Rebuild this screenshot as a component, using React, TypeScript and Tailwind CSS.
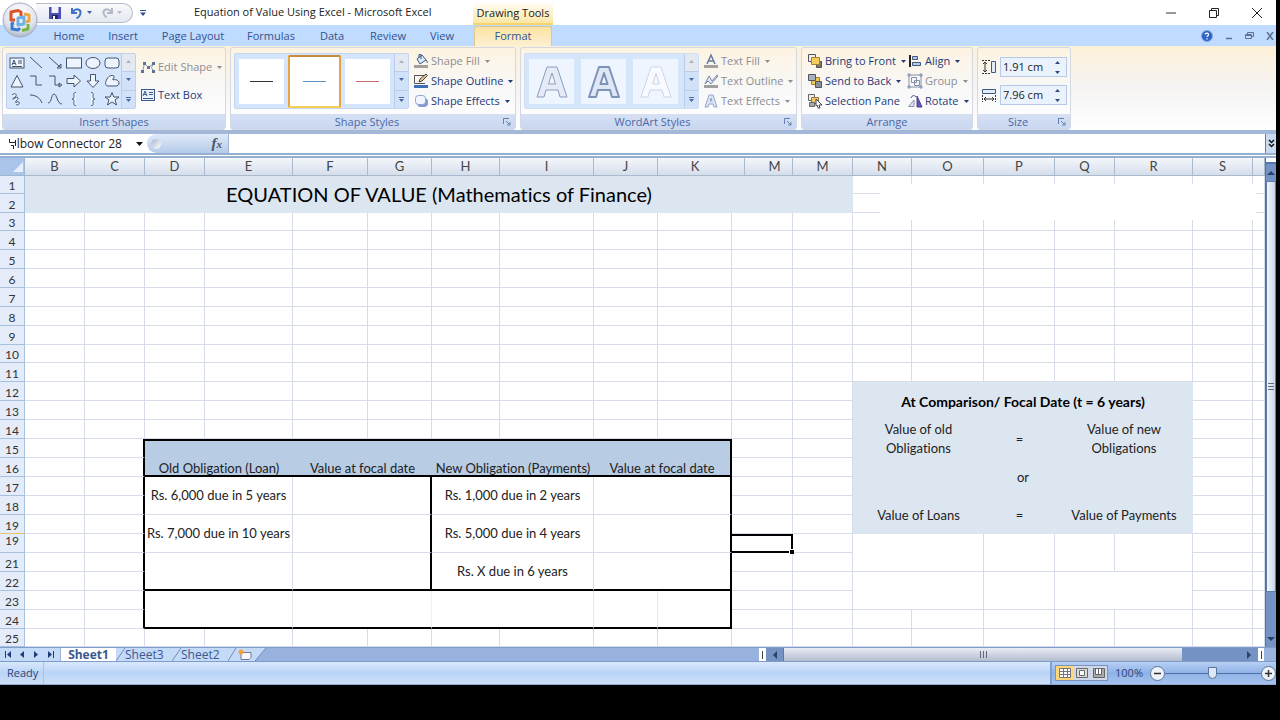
import type { ReactNode } from "react";
import clsx from "clsx";

const TABS = [
  { name: "Home", width: "w-[54px]" },
  { name: "Insert", width: "w-[54px]" },
  { name: "Page Layout", width: "w-[86px]" },
  { name: "Formulas", width: "w-[70px]" },
  { name: "Data", width: "w-[52px]" },
  { name: "Review", width: "w-[60px]" },
  { name: "View", width: "w-[48px]" },
];

const SHAPES: { name: string; art: ReactNode }[] = [
  {
    name: "Text box",
    art: (
      <>
        <rect x="2" y="4" width="14" height="10" />
        <path d="M4 11l2-5 2 5M5 9.500h2M10 7h4M10 9h4M4 12.500h10" />
      </>
    ),
  },
  { name: "Line", art: <path d="M3 3l12 11" /> },
  { name: "Arrow", art: <path d="M3 3l12 11M15 10v4h-4z" /> },
  { name: "Rectangle", art: <rect x="1.500" y="4" width="15" height="10" /> },
  { name: "Oval", art: <ellipse cx="9" cy="9" rx="7" ry="5.500" /> },
  { name: "Rounded rectangle", art: <rect x="2" y="4" width="14" height="10" rx="3" /> },
  { name: "Triangle", art: <path d="M9 3.500L15 15H3z" /> },
  { name: "Elbow connector", art: <path d="M3 4h6v9h6" fill="none" /> },
  { name: "Elbow arrow connector", art: <path d="M3 4h6v9h5M13 11l3 2-3 2z" fill="none" /> },
  { name: "Right arrow", art: <path d="M2 6.500h7V3l6.500 6L9 15v-3.500H2z" /> },
  { name: "Down arrow", art: <path d="M6.500 2.500h5V9H15l-6 6.500L3 9h3.500z" /> },
  {
    name: "Freeform",
    art: <path d="M4 7c2-4 6-4 7-3 1 1-2 3-1 4 2-1 6 0 6 3 0 2-1 3-4 3H5c-3 0-3-4-1-7z" />,
  },
  {
    name: "Scribble",
    art: <path d="M4 5c3-3 6 0 3 2s-3 3 0 1 4 0 2 2-2 3 0 2 3 1 2 2-3 2-2 0" />,
  },
  { name: "Arc", art: <path d="M3 5c6 0 10 3 12 8" fill="none" /> },
  { name: "Curve", art: <path d="M2 13c4 0 3-9 6-9s3 10 8 10" fill="none" /> },
  { name: "Left brace", art: <path d="M11 2.500c-3 0-2 2-2 4s-1 2.500-2 2.500c1 0 2 .500 2 2.500s-1 4 2 4" /> },
  { name: "Right brace", art: <path d="M7 2.500c3 0 2 2 2 4s1 2.500 2 2.500c-1 0-2 .500-2 2.500s1 4-2 4" /> },
  { name: "Star", art: <path d="M9 2.500l1.800 4.500H16l-4 3 1.600 5L9 12l-4.600 3L6 10 2 7h5.200z" /> },
];

function Caret() {
  return (
    <svg className="ml-[3px] h-[3px] w-[5px] shrink-0" viewBox="0 0 5 3" aria-hidden="true">
      <path d="M0 0h5L2.500 3z" fill="currentColor" />
    </svg>
  );
}

function Icon({ children }: { children: ReactNode }) {
  return (
    <svg
      className="h-4 w-4 shrink-0"
      viewBox="0 0 16 16"
      fill="none"
      stroke="#3d5a85"
      strokeWidth="1"
      aria-hidden="true"
    >
      {children}
    </svg>
  );
}

function ToolButton({
  icon,
  label,
  caret = true,
  muted = false,
}: {
  icon: ReactNode;
  label: string;
  caret?: boolean;
  muted?: boolean;
}) {
  return (
    <button
      type="button"
      className={clsx(
        "flex h-5 items-center gap-[2px] whitespace-nowrap",
        muted ? "text-[#8d8d93]" : "text-[#1f3a78]",
      )}
    >
      <Icon>{icon}</Icon>
      <span>{label}</span>
      {caret && <Caret />}
    </button>
  );
}

function Group({
  title,
  width,
  launcher = false,
  children,
}: {
  title: string;
  width: string;
  launcher?: boolean;
  children: ReactNode;
}) {
  return (
    <section
      className={clsx(
        "flex shrink-0 flex-col overflow-hidden rounded-[3px] border border-[#d3d8e2] bg-linear-to-b from-[#fdf3e1] via-[#f8f8f8] to-white",
        width,
      )}
    >
      <div className="flex h-[66px] items-center px-[3px]">{children}</div>
      <div className="flex h-[15px] items-center bg-linear-to-b from-[#d6e0f3] to-[#c9d7f1] text-[#4a69a6]">
        <h2 className="flex-1 text-center leading-[14px]">{title}</h2>
        {launcher && (
          <button type="button" aria-label={`${title} options`} className="mr-1 h-2 w-2">
            <svg viewBox="0 0 8 8" fill="none" stroke="#6480b0" className="block h-2 w-2">
              <path d="M.5 6V.5H6M3 3l4 4M7 4v3H4" />
            </svg>
          </button>
        )}
      </div>
    </section>
  );
}

function GalleryScroll() {
  return (
    <div className="flex w-[14px] shrink-0 flex-col border-l border-[#b9cdea] text-[#4a69a3]">
      {["M0 3h5L2.500 0z", "M0 0h5L2.500 3z", "M0 2h5L2.500 5zM0 0h5v1H0z"].map((d, i) => (
        <button
          key={d}
          type="button"
          aria-label={["Previous row", "Next row", "More"][i]}
          className={clsx(
            "flex flex-1 items-center justify-center border-b border-[#b9cdea] last:border-b-0",
            i === 0 ? "bg-[#e4e8f0] text-[#a9b1c2]" : "bg-[#d1e1f8]",
          )}
        >
          <svg className="h-[5px] w-[5px]" viewBox="0 0 5 5">
            <path d={d} fill="currentColor" />
          </svg>
        </button>
      ))}
    </div>
  );
}

function WordArtSample({ stroke, width, fill }: { stroke: string; width: number; fill: string }) {
  return (
    <button
      type="button"
      aria-label="WordArt style"
      className="flex h-[45px] w-[45px] items-center justify-center bg-[#eff5fe]"
    >
      <svg className="h-9 w-9" viewBox="0 0 36 36" aria-hidden="true">
        <path
          d="M3 34L13 4h10l10 30h-7l-2-7H12l-2 7zM14.500 21h7L18 10z"
          fill={fill}
          stroke={stroke}
          strokeWidth={width}
          strokeLinejoin="round"
        />
      </svg>
    </button>
  );
}

function TitleBar() {
  return (
    <header className="flex h-[25px] items-center bg-white text-xs text-[#222]">
      <div className="ml-9 flex h-5 w-[97px] items-center rounded-r-full border border-l-0 border-[#b8bcc8] bg-linear-to-b from-[#f8f9fc] to-[#e4e8f1] pl-3">
        <button type="button" aria-label="Save">
          <svg className="h-[14px] w-[14px]" viewBox="0 0 14 14">
            <path d="M1 1h12v12H1z" fill="#4a4fb5" />
            <path d="M3.500 1h7v6h-7z" fill="#eef1fb" />
            <path d="M4 9h6v4H4z" fill="#23286e" />
            <path d="M5 10h2v3H5z" fill="#fff" />
          </svg>
        </button>
        <button type="button" aria-label="Undo" className="ml-2 flex items-center text-[#3a5ea8]">
          <svg className="h-[14px] w-[14px]" viewBox="0 0 14 14" fill="none" stroke="#3f73c8" strokeWidth="2">
            <path d="M3 5.500C6 2 11 3 10.500 7c-.2 2-1.500 4-4 5.500M2 2v5h5" />
          </svg>
          <Caret />
        </button>
        <button type="button" aria-label="Redo" className="ml-2 flex items-center text-[#b3b9c6]">
          <svg className="h-[14px] w-[14px]" viewBox="0 0 14 14" fill="none" stroke="#b3b9c6" strokeWidth="2">
            <path d="M11 5.500C8 2 3 3 3.500 7c.2 2 1.500 3 3 4.500M12 2v5H7" />
          </svg>
          <Caret />
        </button>
      </div>
      <button type="button" aria-label="Customize quick access toolbar" className="ml-[7px] text-[#2e4f8d]">
        <svg className="h-[6px] w-[6px]" viewBox="0 0 6 6">
          <path d="M0 0h6v1H0zM0 2.500h6L3 6z" fill="currentColor" />
        </svg>
      </button>
      <h1 className="ml-12 w-[279px] text-[11px] whitespace-nowrap">
        Equation of Value Using Excel - Microsoft Excel
      </h1>
      <div className="h-[22px] w-[80px] self-end border-b-2 border-[#f5d56b] bg-linear-to-b from-[#fffdf6] to-[#fbe6a4] text-center text-[11px] leading-5">
        Drawing Tools
      </div>
      <div className="ml-auto flex items-center gap-[33px] pr-[14px]">
        <button type="button" aria-label="Minimize">
          <svg className="h-3 w-[10px]" viewBox="0 0 10 12">
            <path d="M0 6h10" stroke="#333" />
          </svg>
        </button>
        <button type="button" aria-label="Restore">
          <svg className="h-[10px] w-[10px]" viewBox="0 0 10 10" fill="none" stroke="#222">
            <path d="M.5 2.500h7v7h-7zM2.500 2.500v-2h7v7h-2" />
          </svg>
        </button>
        <button type="button" aria-label="Close">
          <svg className="h-[10px] w-[10px]" viewBox="0 0 10 10" stroke="#222">
            <path d="M0 0l10 10M10 0L0 10" />
          </svg>
        </button>
      </div>
    </header>
  );
}

function OfficeButton() {
  return (
    <button type="button" aria-label="Office menu" className="absolute top-[2px] left-[2px]">
      <svg className="h-9 w-9" viewBox="0 0 36 36" fill="none">
        <defs>
          <radialGradient id="orb" cx=".5" cy=".3" r=".7">
            <stop offset="0" stopColor="#fff" />
            <stop offset=".7" stopColor="#dfe3ec" />
            <stop offset="1" stopColor="#aab4c8" />
          </radialGradient>
        </defs>
        <circle cx="18" cy="18" r="17" fill="url(#orb)" stroke="#a3adc0" />
        <g strokeWidth="3" strokeLinejoin="round">
          <path d="M13 18H9V10l7-1.500L19 10v4" stroke="#d9532a" />
          <path d="M22 12l5 1v6l-3 1" stroke="#f0a63a" />
          <path d="M16 16l6-1v7l-6 1z" stroke="#6fb0e6" />
          <path d="M12 21l-2 .500V27l6 1 2-2" stroke="#3a7bd0" />
          <path d="M26 22v5l-6 1.500" stroke="#74b83e" />
        </g>
      </svg>
    </button>
  );
}

function TabRow() {
  return (
    <nav className="flex h-[21px] items-end bg-[#bfdbff] pl-[42px] text-[11px] text-[#34538f]">
      {TABS.map((t) => (
        <button key={t.name} type="button" className={clsx("h-5 pt-px text-center", t.width)}>
          {t.name}
        </button>
      ))}
      <button
        type="button"
        className="ml-2 h-5 w-[78px] rounded-t-[3px] border border-b-0 border-[#dcc78f] bg-linear-to-b from-[#fbe3a0] to-[#fdf0d2]"
      >
        Format
      </button>
      <div className="ml-auto flex h-[21px] items-center gap-3 pr-[2px]">
        <button type="button" aria-label="Help">
          <svg className="h-3 w-3" viewBox="0 0 12 12" fill="none">
            <circle cx="6" cy="6" r="5.500" fill="#2d62c4" stroke="#86a7e0" />
            <path d="M4 4.500c.5-2 4-1.500 3.500.3C7.200 6 6 6 6 7M6 8.200v1.200" stroke="#fff" strokeWidth="1.300" />
          </svg>
        </button>
        <button type="button" aria-label="Minimize workbook">
          <svg className="h-[9px] w-2" viewBox="0 0 8 9">
            <path d="M1 7.500h6" stroke="#5d7290" strokeWidth="1.500" />
          </svg>
        </button>
        <button type="button" aria-label="Restore workbook">
          <svg className="h-[9px] w-[9px]" viewBox="0 0 9 9" fill="none" stroke="#5d7290">
            <path d="M.5 3.500h6v4h-6zM2.500 3V1.500h6v4H7M.5 4.500h6" />
          </svg>
        </button>
        <button type="button" aria-label="Close workbook">
          <svg className="h-2 w-2" viewBox="0 0 8 8" stroke="#5d7290" strokeWidth="1.500">
            <path d="M1 0l6 8M7 0L1 8" />
          </svg>
        </button>
      </div>
    </nav>
  );
}

const boxArt = (
  <>
    <rect x="1.500" y="2.500" width="13" height="11" fill="#e9f1fd" />
    <path d="M3 9l2-5 2 5M4 7.500h2M9 5.500h4M9 7.500h4M3 11.500h10" />
  </>
);

function Ribbon() {
  return (
    <div className="flex h-[88px] gap-1 border-b-4 border-[#a3b8d8] bg-linear-to-b from-[#fdf0d8] via-[#f5f4f3] to-white px-[2px] pt-px text-[11px]">
      <Group title="Insert Shapes" width="w-[224px]">
        <div className="flex h-[56px] shrink-0 rounded-[2px] border border-[#bdd0ec] bg-[#d5e5fb]">
          <div className="grid w-[114px] grid-cols-6">
            {SHAPES.map((s) => (
              <button key={s.name} type="button" aria-label={s.name} className="flex items-center justify-center">
                <svg className="h-[18px] w-[18px]" viewBox="0 0 18 18" fill="#eef4fd" stroke="#44546d">
                  {s.art}
                </svg>
              </button>
            ))}
          </div>
          <GalleryScroll />
        </div>
        <div className="ml-1 flex flex-col gap-2">
          <ToolButton
            muted
            label="Edit Shape"
            icon={
              <>
                <path d="M2.500 12.500l2-8 4 4 5-4-2 4 2 4" stroke="#8d9ab3" />
                <path d="M1 11h3v3H1zM3 3h3v3H3zM7 7h3v3H7zM12 3h3v3h-3zM12 11h3v3h-3z" fill="#5f7294" stroke="none" />
              </>
            }
          />
          <ToolButton caret={false} label="Text Box" icon={boxArt} />
        </div>
      </Group>

      <Group title="Shape Styles" width="w-[286px]" launcher>
        <div className="flex h-[56px] shrink-0 rounded-[2px] border border-[#c3d5ef] bg-[#d5e5fb]">
          <div className="flex w-[159px] items-center justify-between px-1">
            <button type="button" aria-label="Dark line" className="flex h-[45px] w-[45px] items-center justify-center bg-white">
              <span className="h-px w-[23px] bg-[#333]" />
            </button>
            <button
              type="button"
              aria-label="Blue line"
              className="flex h-[53px] w-[53px] items-center justify-center rounded-[2px] border-2 border-t-[#c98a3c] border-r-[#e3a53c] border-b-[#f6cf52] border-l-[#e3a53c] bg-white"
            >
              <span className="h-px w-[23px] bg-[#5d8fc4]" />
            </button>
            <button type="button" aria-label="Red line" className="flex h-[45px] w-[45px] items-center justify-center bg-white">
              <span className="h-px w-[23px] bg-[#c96a66]" />
            </button>
          </div>
          <GalleryScroll />
        </div>
        <div className="ml-1 flex flex-col">
          <ToolButton
            muted
            label="Shape Fill"
            icon={
              <>
                <path d="M4 6l5-4 4 5-6 4zM6 5V1.500h2V6M13 7c2 1 1 3 1 3" fill="#dde7f5" />
                <path d="M1 12h14v3H1z" fill="#a0a0a0" stroke="none" />
              </>
            }
          />
          <ToolButton
            label="Shape Outline"
            icon={
              <>
                <path d="M12 2.500H1.500v8H12" stroke="#555" />
                <path d="M6 9l1-3 6-5 1.500 1.500L9 8z" fill="#e6c98a" stroke="#444" />
                <path d="M1 12h14v3H1z" fill="#3f6fb5" stroke="none" />
              </>
            }
          />
          <ToolButton
            label="Shape Effects"
            icon={
              <>
                <rect x="4" y="5" width="11" height="9" rx="4" fill="#8399cf" stroke="none" />
                <rect x="2.500" y="2.500" width="10" height="9" rx="3" fill="#f1f5fd" stroke="#8fa5d4" />
              </>
            }
          />
        </div>
      </Group>

      <Group title="WordArt Styles" width="w-[277px]" launcher>
        <div className="flex h-[56px] shrink-0 rounded-[2px] border border-[#cfe0f5] bg-[#d5e6fb]">
          <div className="flex w-[159px] items-center gap-[7px] px-1">
            <WordArtSample stroke="#8e9cbb" width={1} fill="#e4eaf6" />
            <WordArtSample stroke="#7f93b8" width={2} fill="#dfe7f4" />
            <WordArtSample stroke="#cfd5e2" width={1} fill="#f8faff" />
          </div>
          <GalleryScroll />
        </div>
        <div className="ml-1 flex flex-col">
          <ToolButton
            muted
            label="Text Fill"
            icon={
              <>
                <path d="M4 11l4-9 4 9M5.500 8h5" stroke="#66799f" strokeWidth="1.500" />
                <path d="M1 12h14v3H1z" fill="#a0a0a0" stroke="none" />
              </>
            }
          />
          <ToolButton
            muted
            label="Text Outline"
            icon={
              <>
                <path d="M2 11l4-8 3 5 5-6 1 1-7 8-3-3z" fill="#e0e5ef" stroke="#7486a8" />
                <path d="M1 12h14v3H1z" fill="#a0a0a0" stroke="none" />
              </>
            }
          />
          <ToolButton
            muted
            label="Text Effects"
            icon={
              <path
                d="M2 14L6 2h4l4 12h-3l-1-3H6l-1 3zM7 8h2L8 5z"
                fill="#dce5f6"
                stroke="#94a6cc"
              />
            }
          />
        </div>
      </Group>

      <Group title="Arrange" width="w-[172px]">
        <div className="flex w-[102px] shrink-0 flex-col pl-[2px]">
          <ToolButton
            label="Bring to Front"
            icon={
              <>
                <path d="M1.500 1.500h7v7h-7z" fill="#eee" stroke="#555" />
                <path d="M9.500 8.500h5v6h-5z" fill="#777" stroke="#555" />
                <path d="M4.500 4.500h8v7h-8z" fill="#f6cd5a" stroke="#a9802b" />
              </>
            }
          />
          <ToolButton
            label="Send to Back"
            icon={
              <>
                <path d="M4.500 4.500h8v7h-8z" fill="#f3c850" stroke="#a9802b" />
                <path d="M1.500 1.500h7v6h-7z" fill="#a7b0c0" stroke="#555" />
                <path d="M8.500 8.500h6v6h-6z" fill="#888e9a" stroke="#555" />
              </>
            }
          />
          <ToolButton
            caret={false}
            label="Selection Pane"
            icon={
              <>
                <path d="M1.500 1.500h6v6h-6z" fill="#eee" stroke="#666" />
                <path d="M4.500 4.500h7v6h-7z" fill="#efc860" stroke="#997635" />
                <path d="M2.500 9.500h5v4h-5z" fill="#aaa" stroke="#666" />
                <path d="M9 6l6 6h-3l1 3h-2l-1-3-1 1z" fill="#fff" stroke="#445" />
              </>
            }
          />
        </div>
        <div className="flex flex-col">
          <ToolButton
            label="Align"
            icon={
              <>
                <path d="M3 2v12" stroke="#222" strokeWidth="2" />
                <path d="M5.500 3.500h5v3h-5zM5.500 9.500h8v3h-8z" fill="#b9c8df" />
              </>
            }
          />
          <ToolButton
            muted
            label="Group"
            icon={
              <path
                d="M2 2h12v12H2zM4.500 4.500h5v5h-5zM7.500 7.500h5v5h-5zM1 1h2v2H1zM13 1h2v2h-2zM1 13h2v2H1zM13 13h2v2h-2z"
                stroke="#8290ac"
              />
            }
          />
          <ToolButton
            label="Rotate"
            icon={
              <>
                <path d="M7 13.500H1.500L7 7z" fill="#dfe5f0" stroke="#8793a8" />
                <path d="M10 3v11h5z" fill="#6a55b0" stroke="#4d3b94" />
                <path d="M4 5c1-3 4-3 5-1" stroke="#34508c" />
              </>
            }
          />
        </div>
      </Group>

      <Group title="Size" width="w-[94px]" launcher>
        <div className="flex flex-col gap-2">
          <SizeField
            label="Shape height"
            value="1.91 cm"
            icon={
              <>
                <path d="M10.500 2.500h4v11h-4z" fill="#e3ebf7" />
                <path d="M4 3v10M2 5l2-2 2 2M2 11l2 2 2-2" stroke="#333" />
                <path d="M1 1.500h8M1 14.500h8" stroke="#333" strokeDasharray="2 1" />
              </>
            }
          />
          <SizeField
            label="Shape width"
            value="7.96 cm"
            icon={
              <>
                <path d="M1.500 2.500h13v4h-13z" fill="#e3ebf7" />
                <path d="M3 12h10M5 10l-2 2 2 2M11 10l2 2-2 2" stroke="#333" />
                <path d="M1.500 8v7M14.500 8v7" stroke="#333" strokeDasharray="2 1" />
              </>
            }
          />
        </div>
      </Group>
    </div>
  );
}

function SizeField({ label, value, icon }: { label: string; value: string; icon: ReactNode }) {
  return (
    <label className="flex items-center gap-[3px]">
      <Icon>{icon}</Icon>
      <span className="flex h-5 w-[67px] items-center border border-[#b6cae8] bg-[#eaf2fd] pr-[6px]">
        <input aria-label={label} defaultValue={value} className="w-full min-w-0 pl-[2px] text-[#222] outline-none" />
        <svg className="h-[13px] w-[5px] shrink-0" viewBox="0 0 5 13" fill="#2f4a80">
          <path d="M0 3h5L2.500 0zM0 10h5L2.500 13z" />
        </svg>
      </span>
    </label>
  );
}

function FormulaBar() {
  return (
    <div className="flex h-6 items-start border-b-[5px] border-double border-[#96b0d0] bg-white">
      <div className="relative flex h-[19px] w-[147px] items-center">
        <input
          aria-label="Name box"
          defaultValue="Elbow Connector 28"
          className="w-[136px] pl-[10px] text-xs text-[#222] outline-none"
        />
        {/* elbow pointer resting on the first letter */}
        <svg className="absolute top-[3px] left-2 h-[14px] w-[9px] bg-white" viewBox="0 0 9 14" fill="none" stroke="#222">
          <path d="M1.500 2v3.500H8M7.500 3v6M3 8.500h2.500V12" />
        </svg>
        <button type="button" aria-label="Names">
          <svg className="h-1 w-[7px]" viewBox="0 0 7 4">
            <path d="M0 0h7L3.500 4z" fill="#111" />
          </svg>
        </button>
      </div>
      <div className="flex h-[19px] w-[82px] items-center rounded-l-full border-r border-[#9db4d4] bg-linear-to-b from-[#dfeaf9] to-[#b5cbe9] pl-1">
        <span className="h-[10px] w-[10px] rounded-full bg-linear-to-br from-[#a9b8d2] to-white" />
        <button
          type="button"
          aria-label="Insert function"
          className="mr-[6px] ml-auto font-['Liberation_Serif',serif] text-[15px] leading-4 font-bold text-[#4a5468] italic"
        >
          f<span className="text-[11px]">x</span>
        </button>
      </div>
      <input aria-label="Formula" className="h-[19px] min-w-0 flex-1 px-1 text-xs outline-none" />
      <button
        type="button"
        aria-label="Expand formula bar"
        className="flex h-[19px] w-[11px] items-center justify-center border-l border-[#5f7fae] bg-[#c9dbf3]"
      >
        <svg className="h-[9px] w-[7px]" viewBox="0 0 7 9" fill="none" stroke="#111" strokeWidth="1.500">
          <path d="M1 1l2.500 2.500L6 1M1 5l2.500 2.500L6 5" />
        </svg>
      </button>
    </div>
  );
}

// K runs on past its body column and the M beside it starts late
const HEADS = [
  { name: "B" },
  { name: "C" },
  { name: "D" },
  { name: "E" },
  { name: "F" },
  { name: "G" },
  { name: "H" },
  { name: "I" },
  { name: "J" },
  { name: "K", span: 2, pad: "pr-3" },
  { name: "M", pad: "pl-3" },
  { name: "M" },
  { name: "N" },
  { name: "O" },
  { name: "P" },
  { name: "Q" },
  { name: "R" },
  { name: "S" },
  { name: "" },
];

const COL_WIDTHS = [
  "w-[60px]",
  "w-[60px]",
  "w-[60px]",
  "w-[88px]",
  "w-[75px]",
  "w-[64px]",
  "w-[68px]",
  "w-[94px]",
  "w-[64px]",
  "w-[74px]",
  "w-[13px]",
  "w-[48px]",
  "w-[60px]",
  "w-[59px]",
  "w-[72px]",
  "w-[71px]",
  "w-[60px]",
  "w-[78px]",
  "w-[60px]",
  "w-auto",
];

type Cell = { row: number; col: number; rows?: number; cols?: number; text?: ReactNode; style?: string };

const GRID = "border-r border-b border-[#d6dce9]";
const HEAD = "border-t-2 border-b-2 border-black bg-[#b8cce4] align-bottom leading-[14px]";
const PANEL = "bg-[#dce6f1] leading-[19px]";
const TABLE_EDGE = "border-r-2 border-b border-[#d6dce9] border-r-black";

const CELLS: Cell[] = [
  {
    row: 1,
    col: 0,
    rows: 2,
    cols: 13,
    text: "EQUATION OF VALUE (Mathematics of Finance)",
    style: "bg-[#dce6f1] text-[20px] text-black",
  },
  { row: 15, col: 2, rows: 2, cols: 2, text: "Old Obligation (Loan)", style: HEAD },
  { row: 15, col: 4, rows: 2, cols: 2, text: "Value at focal date", style: HEAD },
  { row: 15, col: 6, rows: 2, cols: 2, text: "New Obligation (Payments)", style: HEAD },
  { row: 15, col: 8, rows: 2, cols: 2, text: "Value at focal date", style: clsx(HEAD, "border-r-2") },
  ...[
    { row: 17, old: "Rs. 6,000 due in 5 years", next: "Rs. 1,000 due in 2 years" },
    { row: 19, old: "Rs. 7,000 due in 10 years", next: "Rs. 5,000 due in 4 years" },
    { row: 21, old: "", next: "Rs. X due in 6 years" },
  ].flatMap(({ row, old, next }) => {
    const bottom = row === 21 ? "border-b-2 border-b-black" : "";
    return [
      { row, col: 2, rows: 2, cols: 2, text: old, style: clsx(GRID, bottom) },
      { row, col: 4, rows: 2, cols: 2, style: clsx(GRID, bottom, "border-r-2 border-r-black") },
      { row, col: 6, rows: 2, cols: 2, text: next, style: clsx(GRID, bottom) },
      { row, col: 8, rows: 2, cols: 2, style: clsx(GRID, bottom, "border-r-2 border-r-black") },
    ];
  }),
  { row: 23, col: 2, rows: 2, cols: 2, style: "border-r border-b-2 border-black border-r-[#e4e8f0]" },
  { row: 23, col: 4, rows: 2, cols: 2, style: "border-r border-b-2 border-black border-r-[#f0f2f7]" },
  { row: 23, col: 6, rows: 2, cols: 2, style: "border-r border-b-2 border-black border-r-[#e4e8f0]" },
  { row: 23, col: 8, rows: 2, style: "border-r border-b-2 border-black border-r-[#e4e8f0]" },
  { row: 23, col: 9, rows: 2, style: "border-r-2 border-b-2 border-black" },
  {
    row: 12,
    col: 13,
    rows: 2,
    cols: 5,
    text: "At Comparison/ Focal Date (t = 6 years)",
    style: clsx(PANEL, "text-sm font-bold text-black"),
  },
  { row: 14, col: 13, rows: 2, cols: 2, text: <>Value of old<br />Obligations</>, style: PANEL },
  { row: 14, col: 15, rows: 2, text: "=", style: PANEL },
  { row: 14, col: 16, rows: 2, cols: 2, text: <>Value of new<br />Obligations</>, style: PANEL },
  { row: 16, col: 13, rows: 2, cols: 5, text: "or", style: PANEL },
  { row: 18, col: 13, rows: 2, cols: 2, text: "Value of Loans", style: PANEL },
  { row: 18, col: 15, rows: 2, text: "=", style: PANEL },
  { row: 18, col: 16, rows: 2, cols: 2, text: "Value of Payments", style: PANEL },
  { row: 20, col: 13, rows: 2, cols: 2 },
  { row: 20, col: 15, rows: 2 },
  { row: 20, col: 16, rows: 2 },
  { row: 20, col: 17, rows: 2 },
  { row: 22, col: 13, rows: 2, cols: 2 },
  { row: 22, col: 15, rows: 2 },
  { row: 22, col: 16, rows: 2, cols: 2 },
  {
    row: 20,
    col: 10,
    cols: 2,
    text: <span className="absolute -right-[3px] -bottom-[3px] h-[5px] w-[5px] border-t border-l border-white bg-black" />,
    style: "relative z-10 border-2 border-l-0 border-black",
  },
];

const ROWS = Array.from({ length: 25 }, (_, i) => i + 1);
const SHORT_ROWS = [1, 3, 10, 25];

function rowCells(row: number): Cell[] {
  const out: Cell[] = [];
  let col = 0;
  while (col < COL_WIDTHS.length) {
    const at = col;
    const hit = CELLS.find(
      (c) =>
        row >= c.row &&
        row < c.row + (c.rows ?? 1) &&
        at >= c.col &&
        at < c.col + (c.cols ?? 1),
    );
    if (hit) {
      if (hit.row === row) out.push(hit);
      col = hit.col + (hit.cols ?? 1);
    } else {
      const cols = col === 10 ? 2 : 1;
      const besideTable = col === 1 && row >= 15 && row <= 24;
      out.push({ row, col, cols, style: besideTable ? TABLE_EDGE : GRID });
      col += cols;
    }
  }
  return out;
}

function Sheet() {
  return (
    <div className="flex bg-white">
      <div className="relative min-w-0 flex-1">
        <table className="w-full table-fixed border-separate border-spacing-0 font-['Lato',sans-serif] text-[13px] leading-[17px] text-[#222] [font-variant-ligatures:none]">
          <colgroup>
            <col className="w-[25px]" />
            {COL_WIDTHS.map((w, i) => (
              <col key={i} className={w} />
            ))}
          </colgroup>
          <thead>
            <tr className="h-[18px]">
              <td className="border-r border-b border-[#9eb6ce] bg-[#aac5ec] p-0">
                <svg className="ml-auto h-3 w-3" viewBox="0 0 12 12">
                  <path d="M11 1v10H1z" fill="#e6effb" />
                </svg>
              </td>
              {HEADS.map((h, i) => (
                <th
                  key={i}
                  scope="col"
                  colSpan={h.span ?? 1}
                  className={clsx(
                    "border-r border-b border-[#a9bace] bg-linear-to-b from-[#f4f7fb] to-[#d5deeb] py-0 text-center font-normal text-[#444]",
                    h.pad ?? "px-0",
                  )}
                >
                  {h.name}
                </th>
              ))}
            </tr>
          </thead>
          <tbody>
            {ROWS.map((row) => (
              <tr key={row} className={SHORT_ROWS.includes(row) ? "h-[18px]" : "h-[19px]"}>
                <th
                  scope="row"
                  className={clsx(
                    "border-r border-b border-[#a9c0dd] bg-[#e3ecf8] px-0 pb-0 text-center text-xs font-normal text-[#333]",
                    row === 19 && "border-b-[#e9c36a]",
                    row === 20 ? "pt-0 align-top leading-[14px]" : "pt-[3px] leading-[14px]",
                  )}
                >
                  {row === 20 ? 19 : row}
                </th>
                {rowCells(row).map((c) => (
                  <td
                    key={c.col}
                    rowSpan={c.rows ?? 1}
                    colSpan={c.cols ?? 1}
                    className={clsx("p-0 text-center whitespace-nowrap", c.style ?? GRID)}
                  >
                    {c.text}
                  </td>
                ))}
              </tr>
            ))}
          </tbody>
        </table>
        {/* blank shape laid over the cells beside the heading */}
        <div className="absolute top-[26px] right-[9px] left-[880px] h-9 bg-white" />
      </div>

      <div className="flex w-[11px] flex-col border-l border-[#54719f] bg-[#7493c4]">
        <div className="h-[6px] border-b-2 border-[#5577ab] bg-white" />
        <button type="button" aria-label="Scroll up" className="flex h-[17px] items-center justify-center">
          <svg className="h-1 w-2" viewBox="0 0 8 4">
            <path d="M0 4h8L4 0z" fill="#2c4168" />
          </svg>
        </button>
        <div className="flex h-[411px] flex-col items-center justify-center gap-[2px] border border-[#5d7cab] bg-linear-to-r from-[#f3f6fb] to-[#c9d4e8]">
          <span className="h-px w-[6px] bg-[#667]" />
          <span className="h-px w-[6px] bg-[#667]" />
          <span className="h-px w-[6px] bg-[#667]" />
        </div>
        <button type="button" aria-label="Scroll down" className="mt-auto flex h-4 items-center justify-center">
          <svg className="h-1 w-2" viewBox="0 0 8 4">
            <path d="M0 0h8L4 4z" fill="#2c4168" />
          </svg>
        </button>
      </div>
    </div>
  );
}

function SheetTabs() {
  return (
    <div className="flex h-[15px] items-stretch border-t border-b border-[#7d9cc9] bg-[#97b3dd] text-xs leading-[13px] text-[#3a5890]">
      <div className="flex w-[60px] items-center justify-between bg-[#c5daf6] pr-[6px] pl-[5px]">
        {["M0 0h1v7H0zM6 0v7L2 3.500z", "M5 0v7L1 3.500z", "M1 0v7L5 3.500z", "M6 0h1v7H6zM1 0v7l4-3.500z"].map((d, i) => (
          <button key={d} type="button" aria-label={["First sheet", "Previous sheet", "Next sheet", "Last sheet"][i]}>
            <svg className="block h-[7px] w-[7px]" viewBox="0 0 7 7">
              <path d={d} fill="#1f3d7a" />
            </svg>
          </button>
        ))}
      </div>
      <button type="button" className="w-[56px] border-l border-[#9bb5da] bg-white text-center font-bold">
        Sheet1
      </button>
      {["Sheet3", "Sheet2"].map((name) => (
        <button key={name} type="button" className="flex w-14 bg-[#c5daf6]">
          <svg className="h-[13px] w-[9px] shrink-0" viewBox="0 0 9 13">
            <path d="M0 13L9 0" stroke="#6f8dbb" />
          </svg>
          <span>{name}</span>
        </button>
      ))}
      <button type="button" aria-label="Insert sheet" className="flex bg-[#c5daf6]">
        <svg className="block h-[13px] w-10" viewBox="0 0 40 13">
          <path d="M40 0v13H27L38 0z" fill="#97b3dd" />
          <path d="M0 13L8 0M27 13L38 0" stroke="#6f8dbb" />
          <path d="M13 4.500h10v5l-2 2h-8z" fill="#f5f7fb" stroke="#6b7a96" />
          <circle cx="13" cy="4" r="2.500" fill="#f0a23c" />
        </svg>
      </button>
      <div className="ml-auto flex w-[41%] max-w-[517px]">
        <div className="flex w-[7px] items-center justify-center bg-white">
          <span className="h-2 w-px bg-[#444]" />
        </div>
        <button type="button" aria-label="Scroll left" className="flex w-[17px] items-center justify-center bg-[#7493c4]">
          <svg className="h-2 w-1" viewBox="0 0 4 8">
            <path d="M4 0v8L0 4z" fill="#2c4168" />
          </svg>
        </button>
        <div className="flex flex-1 bg-[#7493c4]">
          <div className="flex w-[84%] items-center justify-center gap-[2px] border-l border-[#5d7cab] bg-linear-to-b from-[#e9ecf4] to-[#b3bccf]">
            <span className="h-[7px] w-px bg-[#667]" />
            <span className="h-[7px] w-px bg-[#667]" />
            <span className="h-[7px] w-px bg-[#667]" />
          </div>
          <button type="button" aria-label="Scroll right" className="mr-[7px] ml-auto flex items-center">
            <svg className="h-2 w-1" viewBox="0 0 4 8">
              <path d="M0 0v8l4-4z" fill="#2c4168" />
            </svg>
          </button>
        </div>
        <div className="mr-3 flex w-[6px] items-center justify-center bg-white">
          <span className="h-2 w-px bg-[#444]" />
        </div>
      </div>
    </div>
  );
}

function StatusBar() {
  return (
    <footer className="flex h-[23px] items-stretch border-b border-[#8fa9cf] bg-linear-to-b from-[#d9e8fc] via-[#b9d3f7] to-[#cfe0f8] text-[11px] text-[#2c447a]">
      <span className="w-11 border-r border-[#a9c3e8] pl-[7px] leading-[21px]">Ready</span>
      <div className="ml-auto flex w-[226px] items-center border-l-2 border-[#7f9fd0] bg-linear-to-b from-[#b7d0f5] via-[#8fb2e6] to-[#a5c3ee] pl-[3px]">
        <div className="flex h-4 w-[53px] border border-[#7d94ba] bg-[#cfd9ea]">
          <button type="button" aria-label="Normal view" className="flex flex-1 items-center justify-center bg-[#ffd779]">
            <svg className="h-[10px] w-3" viewBox="0 0 12 10" fill="#fff" stroke="#777">
              <path d="M.5.500h11v9H.5zM.5 3.500h11M.5 6.500h11M4.500.500v9M8.500.500v9" />
            </svg>
          </button>
          <button type="button" aria-label="Page layout view" className="flex flex-1 items-center justify-center">
            <svg className="h-[10px] w-3" viewBox="0 0 12 10" fill="#ddd" stroke="#666">
              <path d="M.5.500h11v9H.5z" />
              <path d="M3.500 2.500h5v5h-5z" fill="#fff" />
            </svg>
          </button>
          <button type="button" aria-label="Page break preview" className="flex flex-1 items-center justify-center">
            <svg className="h-[10px] w-3" viewBox="0 0 12 10" fill="#fff" stroke="#666">
              <path d="M.5.500h11v9H.5z" fill="#aaa" />
              <path d="M2.500.500h3v6h-3zM5.500.500h3v6h-3z" />
            </svg>
          </button>
        </div>
        <span className="w-[42px] text-center">100%</span>
        <ZoomButton label="Zoom out" d="M4 7.500h7" />
        <input
          type="range"
          aria-label="Zoom"
          defaultValue={49}
          className="h-[14px] min-w-0 flex-1 appearance-none bg-transparent bg-[linear-gradient(#4f70a8,#4f70a8)] bg-[length:100%_1px] bg-center bg-no-repeat [&::-webkit-slider-thumb]:h-3 [&::-webkit-slider-thumb]:w-[9px] [&::-webkit-slider-thumb]:appearance-none [&::-webkit-slider-thumb]:rounded-b-full [&::-webkit-slider-thumb]:border [&::-webkit-slider-thumb]:border-[#5d7297] [&::-webkit-slider-thumb]:bg-[#dfe8f6]"
        />
        <ZoomButton label="Zoom in" d="M4 7.500h7M7.500 4v7" />
      </div>
    </footer>
  );
}

function ZoomButton({ label, d }: { label: string; d: string }) {
  return (
    <button type="button" aria-label={label} className="shrink-0">
      <svg className="block h-[15px] w-[15px]" viewBox="0 0 15 15">
        <circle cx="7.500" cy="7.500" r="7" fill="#eef3fb" stroke="#5d7297" />
        <path d={d} stroke="#333" strokeWidth="1.500" />
      </svg>
    </button>
  );
}

export default function App() {
  return (
    <div className="min-h-screen bg-black pr-1 font-['Open_Sans',sans-serif]">
      <main className="relative overflow-hidden bg-white">
        <TitleBar />
        <TabRow />
        <OfficeButton />
        <Ribbon />
        <FormulaBar />
        <Sheet />
        <SheetTabs />
        <StatusBar />
      </main>
    </div>
  );
}
